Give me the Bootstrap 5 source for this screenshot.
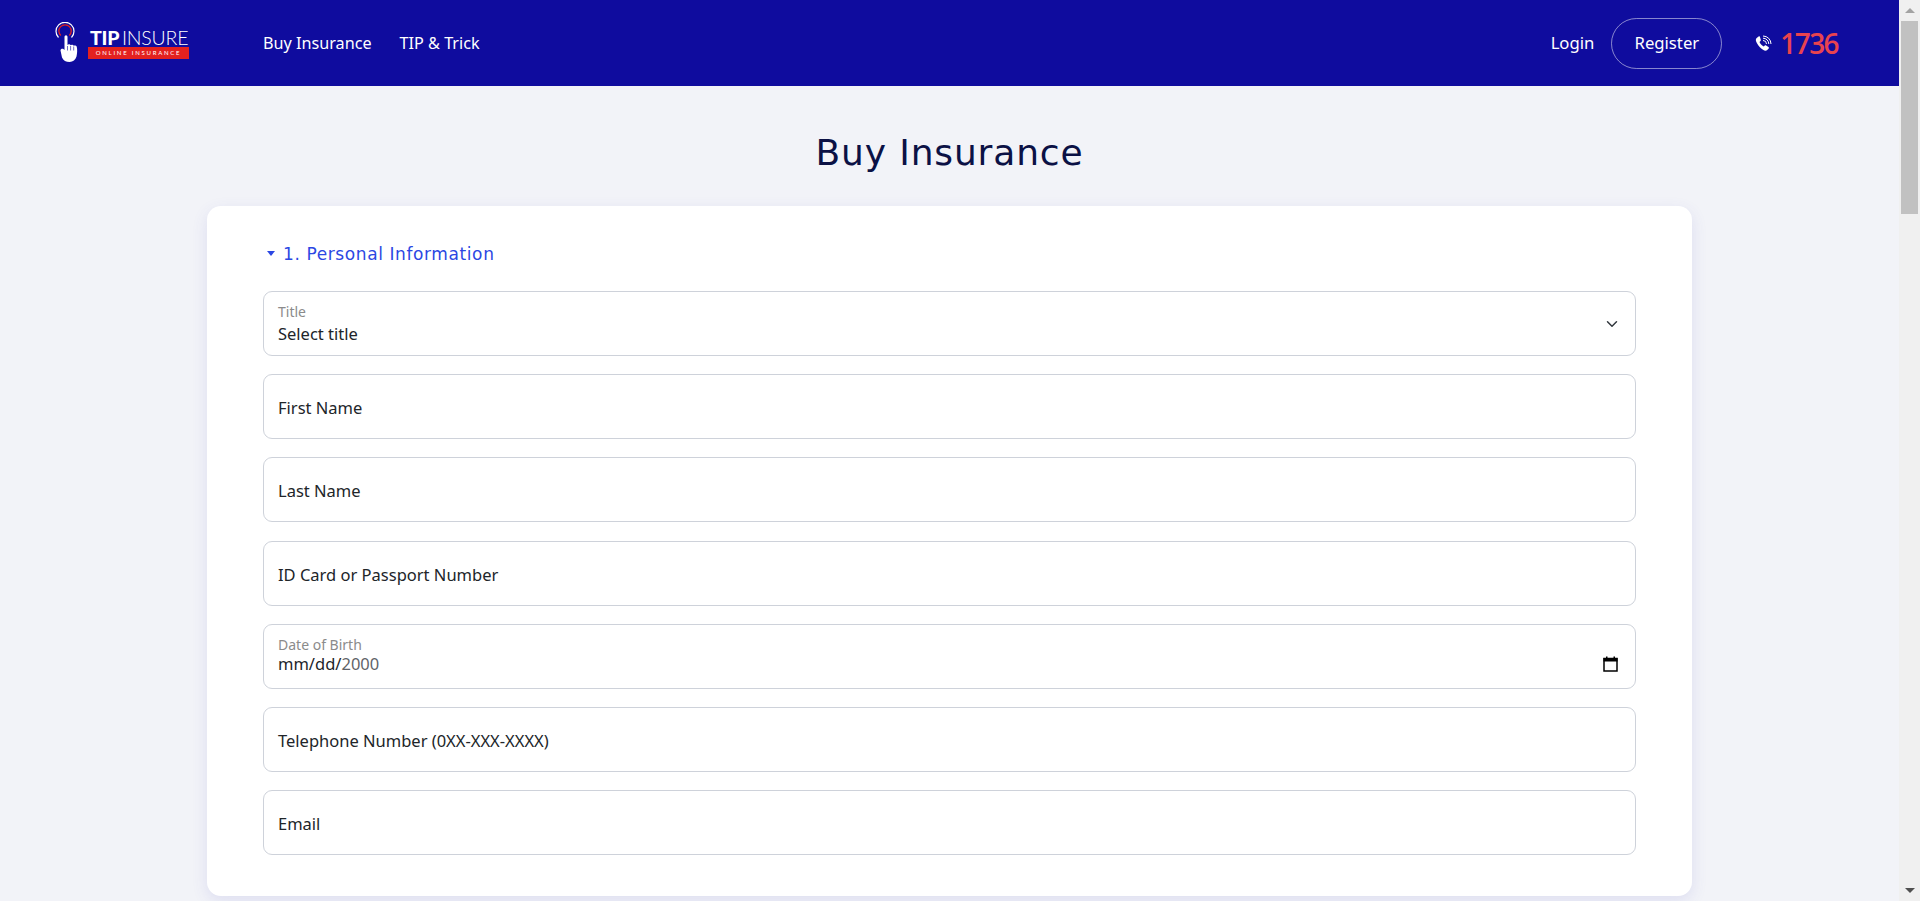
<!DOCTYPE html>
<html lang="en">
<head>
    <meta charset="UTF-8">
    <meta name="viewport" content="width=device-width, initial-scale=1.0">
    <title>Buy Insurance</title>
    <link href="https://cdn.jsdelivr.net/npm/bootstrap@5.3.0/dist/css/bootstrap.min.css" rel="stylesheet">
    <style>
        body { background: #f2f3f8; font-family: "Noto Sans", sans-serif; padding-right: 21px; padding-bottom: 40px; }

        .fake-scroll { position: fixed; top: 0; right: 0; bottom: 0; width: 21px; background: #f0f0f0; align-items: center; }
        .scroll-end { height: 21px; flex: none; }
        .scroll-thumb { width: 17px; height: 193px; background: #c1c1c1; flex: none; }
        .arrow-up { border: 5px solid transparent; border-bottom: 5px solid #a3a3a3; border-top: 0; }
        .arrow-down { border: 5px solid transparent; border-top: 5px solid #505050; border-bottom: 0; }

        .top-bar { background: #0f0c9e; height: 86px; padding: 0 61px 0 55px; }
        .logo-link { gap: 6px; margin-right: 74px; padding: 0; }
        .logo-words { width: 101px; }
        .logo-name { font-family: Lato, sans-serif; font-size: 19.5px; line-height: 19px; color: #fff; font-weight: 300; padding-left: 2px; white-space: nowrap; word-spacing: -2.5px; letter-spacing: -.2px; }
        .logo-name b { font-weight: 900; }
        .logo-tag { background: #e3211f; color: #fff; font-family: Lato, sans-serif; font-size: 6px; line-height: 12px; letter-spacing: 1.75px; text-align: center; white-space: nowrap; }
        .top-bar .top-link { color: #fff; font-size: 16.7px; padding: 0; }
        .top-bar .navbar-nav .top-link { color: #fff; font-size: 16.2px; padding: 0; }
        .main-links { gap: 28px; }
        .reg-btn { font-size: 16.7px; color: #fff; border: 1px solid rgba(255, 255, 255, .5); width: 111px; height: 51px; padding: 0; line-height: 48px; margin: 0 33px 0 17px; }
        .hotline { color: #e9434f; font-family: "Open Sans", sans-serif; font-size: 28px; line-height: 1; font-weight: 600; letter-spacing: -1.6px; gap: 8px; }

        .page-title { font-family: "DejaVu Sans", sans-serif; font-size: 36px; letter-spacing: .85px; line-height: 48px; color: #0b1145; margin: 42px 0 30px; font-weight: 400; padding-top: 1px; height: 48px; }
        .form-box { width: 1485px; padding: 35px 56px 41px; border-radius: 14px; border: 0; box-shadow: 0 5px 16px rgba(70, 70, 190, .12); }
        .step-head { color: #2b47e3; font-family: "DejaVu Sans", sans-serif; font-size: 17px; letter-spacing: .6px; line-height: 26px; height: 24px; margin-bottom: 26px; gap: 8px; padding-left: 4px; padding-top: 1px; }
        .step-arrow { width: 0; height: 0; border: 4px solid transparent; border-top: 5px solid #2b47e3; border-bottom: 0; }

        .field { margin-bottom: 18.2px; }
        .field:last-child { margin-bottom: 0; }
        .field > .form-control, .field > .form-select { height: 65px; min-height: 65px; border: 1px solid #ced2da; border-radius: 9px; font-size: 16.5px; color: #212529; padding: 28px 14px 8px; line-height: 24px; }
        .field > .form-select { background-position: right 15px center; }
        .field > label { padding: 0 14px; height: 65px; line-height: 65px; color: #212529; font-size: 16.5px; border: 1px solid transparent; }
        .field > .form-control:not(:placeholder-shown) ~ label,
        .field > .form-select ~ label { line-height: 1; padding: 13px 14px 0; font-size: 14px; color: #8b8b8b; opacity: 1; transform: none; }
        .field > .date-box { display: flex; align-items: center; justify-content: space-between; padding: 31px 17px 8px 14px; }
        .date-year { color: #5f6368; }
    </style>
</head>
<body>
    <nav class="navbar navbar-expand-lg top-bar">
        <a class="navbar-brand d-flex align-items-center logo-link" href="#">
            <svg width="27" height="42" viewBox="0 0 27 42">
                <path d="M3.500 15.500a9 9 0 1 1 13 0" fill="none" stroke="#fff" stroke-width="1.200"/>
                <path d="M5.800 13.500a6.200 6.200 0 1 1 8.500 0" fill="none" stroke="#e3211f" stroke-width="1.300"/>
                <path d="M9.500 15c0-1 .7-1.700 1.500-1.700s1.500.7 1.500 1.700v8c.5-.9 2.700-.9 3.100.2.600-.8 2.600-.7 3.100.5.800-.6 2.700-.3 3 .9.900 3 .4 7.500-.2 10-1 3.500-3.500 5.400-6.800 5.400-3.800 0-6.300-1.500-7.700-4.500L5.500 28.500c0-1.500 1.500-2 2.900-1.500l1.100 1z" fill="#fff"/>
                <path d="M15.600 24v4.500M18.700 24.500v4M12.500 24v4.500" fill="none" stroke="#0f0c9e" stroke-width=".6"/>
            </svg>
            <span class="logo-words">
                <span class="d-block logo-name"><b>TIP</b> INSURE</span>
                <span class="d-block logo-tag">ONLINE INSURANCE</span>
            </span>
        </a>
        <ul class="navbar-nav flex-row me-auto main-links">
            <li class="nav-item"><a class="nav-link top-link" href="#">Buy Insurance</a></li>
            <li class="nav-item"><a class="nav-link top-link" href="#">TIP &amp; Trick</a></li>
        </ul>
        <a class="nav-link top-link" href="#">Login</a>
        <a class="btn rounded-pill reg-btn" href="#">Register</a>
        <div class="d-flex align-items-center hotline">
            <svg width="17" height="17" viewBox="0 0 17 17">
                <path d="M3.600 1.500 1.400 3.200C.4 4.300.8 6.200 2 8.300c1.500 2.800 3.600 5 6 6.500 1.500.9 3 1.200 4 .4l1.700-1.700c.4-.5.300-1-.2-1.400l-2.400-1.700c-.5-.3-.9-.3-1.300.1l-1 1c-1.500-.7-3.500-2.800-4.300-4.600l1-.9c.4-.4.5-.9.200-1.400L4.900 1.700c-.4-.5-.9-.6-1.300-.2z" fill="#fff"/>
                <path d="M8 5.500a3.500 3.500 0 0 1 3.500 3.500M8 3.200A5.800 5.800 0 0 1 13.800 9M8 1a8 8 0 0 1 8 8" fill="none" stroke="#fff" stroke-width="1"/>
            </svg>
            <span>1736</span>
        </div>
    </nav>

    <h1 class="text-center page-title">Buy Insurance</h1>

    <form class="card form-box mx-auto">
        <div class="d-flex align-items-center step-head">
            <span class="step-arrow"></span>
            <span>1. Personal Information</span>
        </div>
        <div class="form-floating field">
            <select class="form-select" id="title">
                <option selected>Select title</option>
                <option>Mr.</option>
                <option>Mrs.</option>
                <option>Ms.</option>
            </select>
            <label for="title">Title</label>
        </div>
        <div class="form-floating field">
            <input type="text" class="form-control" id="firstName" placeholder=" ">
            <label for="firstName">First Name</label>
        </div>
        <div class="form-floating field">
            <input type="text" class="form-control" id="lastName" placeholder=" ">
            <label for="lastName">Last Name</label>
        </div>
        <div class="form-floating field">
            <input type="text" class="form-control" id="idCard" placeholder=" ">
            <label for="idCard">ID Card or Passport Number</label>
        </div>
        <div class="form-floating field">
            <div class="form-control date-box" id="birthDate">
                <span>mm/dd/<span class="date-year">2000</span></span>
                <svg width="15" height="16" viewBox="0 0 15 16">
                    <path d="M1 2.500h13v12.500H1z" fill="none" stroke="#000" stroke-width="1.500"/>
                    <path d="M.5 2h14v3.500H.5zM3 .5h1.500V2H3zM10.500.5H12V2h-1.500z" fill="#000"/>
                </svg>
            </div>
            <label>Date of Birth</label>
        </div>
        <div class="form-floating field">
            <input type="tel" class="form-control" id="phone" placeholder=" ">
            <label for="phone">Telephone Number (0XX-XXX-XXXX)</label>
        </div>
        <div class="form-floating field">
            <input type="email" class="form-control" id="email" placeholder=" ">
            <label for="email">Email</label>
        </div>
    </form>

    <div class="d-flex flex-column fake-scroll">
        <div class="d-flex align-items-center scroll-end"><span class="arrow-up"></span></div>
        <div class="scroll-thumb"></div>
        <div class="d-flex align-items-center scroll-end mt-auto"><span class="arrow-down"></span></div>
    </div>

    <script src="https://cdn.jsdelivr.net/npm/bootstrap@5.3.0/dist/js/bootstrap.bundle.min.js"></script>
</body>
</html>
